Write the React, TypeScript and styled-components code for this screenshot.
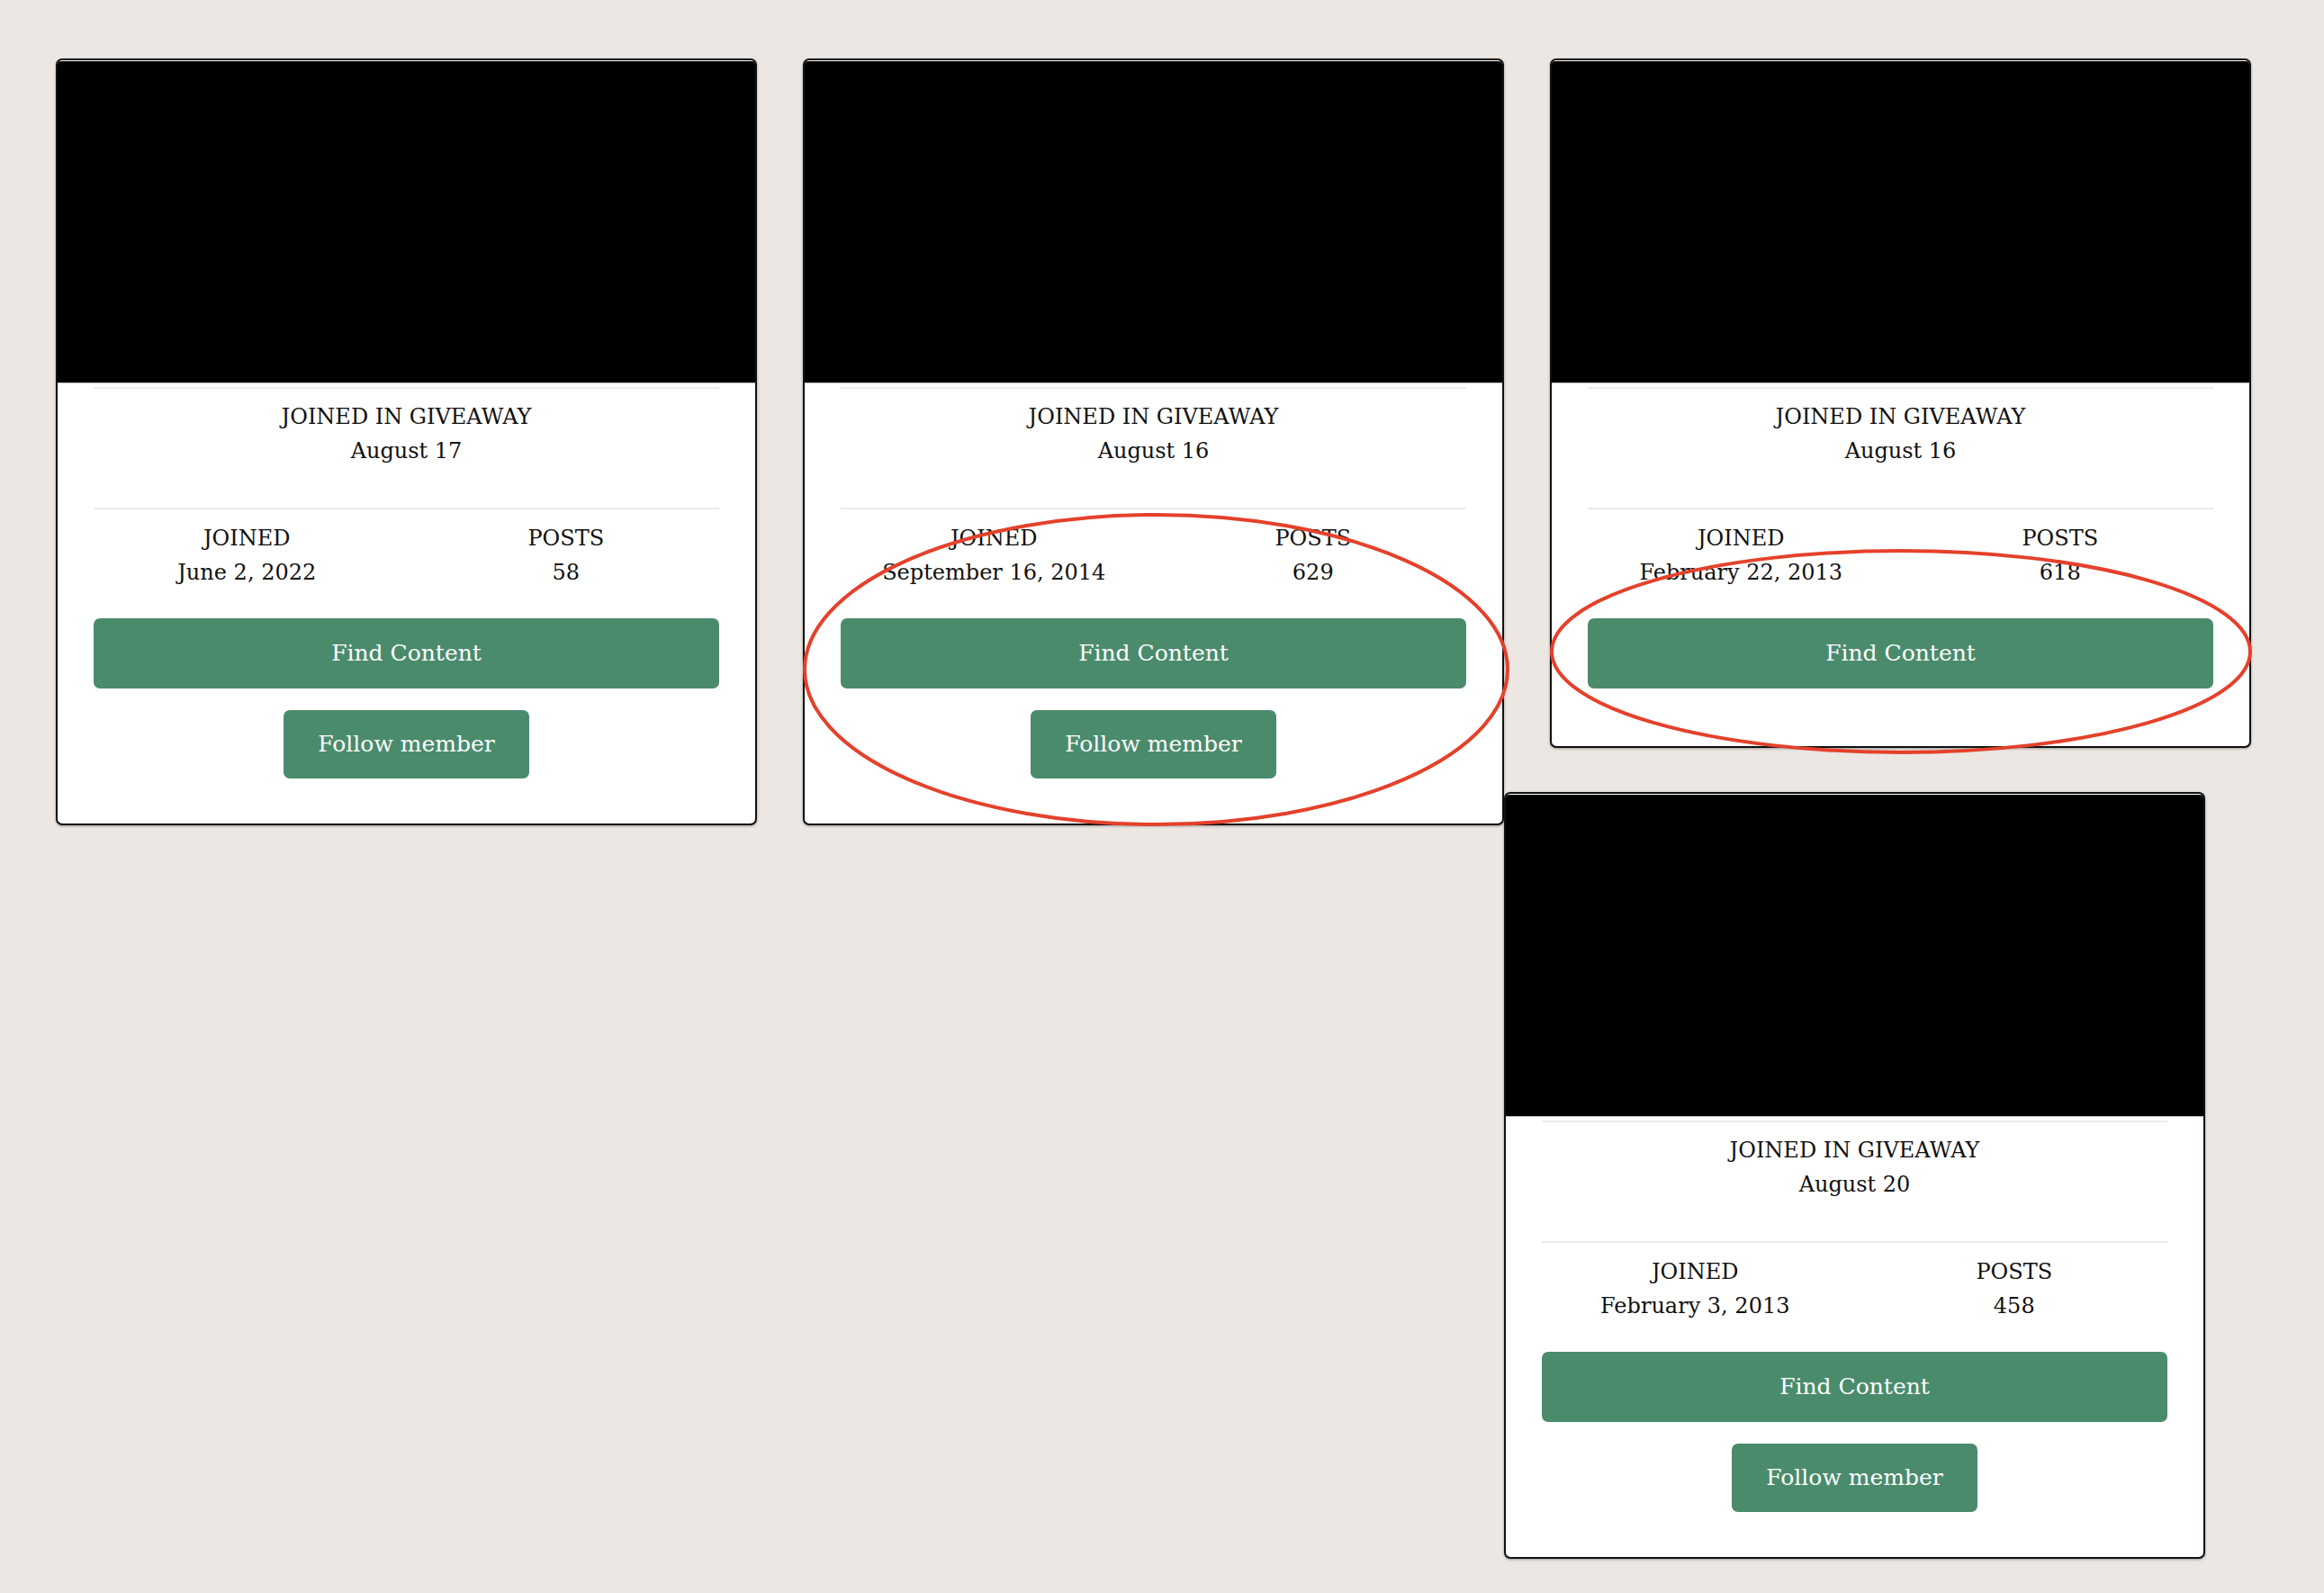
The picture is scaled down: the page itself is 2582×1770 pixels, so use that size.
import React from 'react'
import styled, { createGlobalStyle } from 'styled-components'

const GlobalStyle = createGlobalStyle`
	html, body {
		margin: 0;
		padding: 0;
		background: #ece7e3;
	}
	body {
		min-height: 100vh;
		font-family: "DejaVu Serif", "Liberation Serif", serif;
		color: #111;
	}
`

const Page = styled.div`
	display: flex;
	align-items: flex-start;
	gap: 51px;
	padding: 65px 0 0 62px;
`

const Stack = styled.div`
	display: flex;
	flex-direction: column;
	gap: 49px;
`

const Card = styled.div<{ $shift?: boolean }>`
	position: relative;
	box-sizing: border-box;
	width: 779px;
	background: #ffffff;
	border: 2px solid #111;
	border-radius: 7px;
	box-shadow: 0 1px 3px rgba(0, 0, 0, 0.35);
	margin-left: ${p => (p.$shift ? '-51px' : '0')};
`

const Cover = styled.div`
	height: 357px;
	margin-top: 1px;
	background: #000;
	border-bottom: 1px solid #b9b9b9;
	border-radius: 4px 4px 0 0;
`

const Body = styled.div<{ $short?: boolean }>`
	display: flex;
	flex-direction: column;
	padding: 4px 40px ${p => (p.$short ? '52px' : '50px')} 40px;
`

const Rule = styled.div`
	flex: none;
	height: 2px;
	background: #ebebeb;
`

const Giveaway = styled.div`
	padding: 12px 0 0;
	margin-bottom: 44px;
	text-align: center;
	font-size: 24px;
	line-height: 38px;
`

const Line = styled.div`
	white-space: nowrap;
`

const Stats = styled.div`
	display: grid;
	grid-template-columns: 1fr 1fr;
	column-gap: 14px;
	padding-top: 13px;
	margin-bottom: 32px;
	font-size: 24px;
	line-height: 38px;
	text-align: center;
`

const Button = styled.button<{ $wide?: boolean }>`
	display: block;
	box-sizing: border-box;
	border: none;
	border-radius: 7px;
	background: #4a8b6c;
	color: #ffffff;
	font-family: "DejaVu Serif", "Liberation Serif", serif;
	font-size: 25px;
	line-height: 38px;
	cursor: pointer;
	width: ${p => (p.$wide ? '100%' : 'auto')};
	padding: ${p => (p.$wide ? '20px 0' : '19px 38px')};
	margin: ${p => (p.$wide ? '0 0 12px' : '12px auto 0')};
`

const Highlight = styled.svg<{ $left: number; $top: number }>`
	position: absolute;
	left: ${p => p.$left}px;
	top: ${p => p.$top}px;
	pointer-events: none;
	overflow: visible;
	z-index: 2;
`

type Circle = { left: number; top: number; w: number; h: number }

type Member = {
	giveaway: string
	joined: string
	posts: string
	follow: boolean
	circle?: Circle
}

const members: Member[] = [
	{ giveaway: 'August 17', joined: 'June 2, 2022', posts: '58', follow: true },
	{
		giveaway: 'August 16',
		joined: 'September 16, 2014',
		posts: '629',
		follow: true,
		circle: { left: -2, top: 503, w: 785, h: 348 },
	},
	{
		giveaway: 'August 16',
		joined: 'February 22, 2013',
		posts: '618',
		follow: false,
		circle: { left: -2, top: 543, w: 780, h: 228 },
	},
	{ giveaway: 'August 20', joined: 'February 3, 2013', posts: '458', follow: true },
]

const MemberCard: React.FC<{ member: Member; shift?: boolean }> = ({ member, shift }) => {
	const c = member.circle
	return (
		<Card $shift={shift}>
			<Cover />
			<Body $short={!member.follow}>
				<Rule />
				<Giveaway>
					<Line>JOINED IN GIVEAWAY</Line>
					<Line>{member.giveaway}</Line>
				</Giveaway>
				<Rule />
				<Stats>
					<div>
						<Line>JOINED</Line>
						<Line>{member.joined}</Line>
					</div>
					<div>
						<Line>POSTS</Line>
						<Line>{member.posts}</Line>
					</div>
				</Stats>
				<Button $wide>Find Content</Button>
				{member.follow && <Button>Follow member</Button>}
			</Body>
			{c && (
				<Highlight $left={c.left} $top={c.top} width={c.w} height={c.h}>
					<ellipse
						cx={c.w / 2}
						cy={c.h / 2}
						rx={c.w / 2 - 2}
						ry={c.h / 2 - 2}
						fill="none"
						stroke="#e4412b"
						strokeWidth={4}
					/>
				</Highlight>
			)}
		</Card>
	)
}

const App = () => {
	return (
		<>
			<GlobalStyle />
			<Page>
				<MemberCard member={members[0]} />
				<MemberCard member={members[1]} />
				<Stack>
					<MemberCard member={members[2]} />
					<MemberCard member={members[3]} shift />
				</Stack>
			</Page>
		</>
	)
}

export default App
